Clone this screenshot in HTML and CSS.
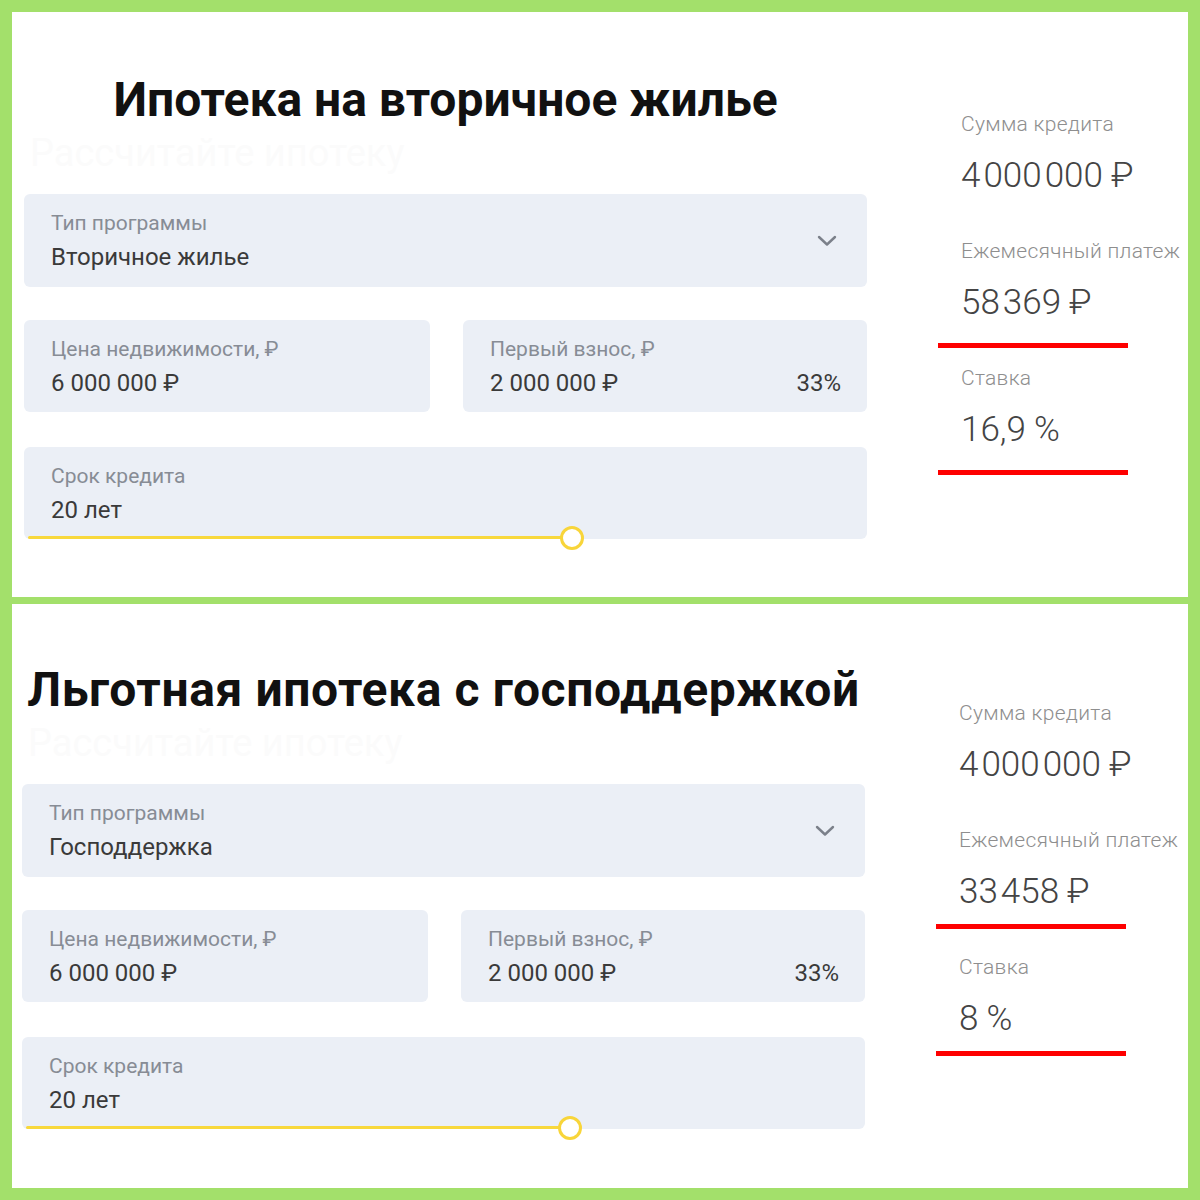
FILE: index.html
```html
<!DOCTYPE html>
<html lang="ru">
<head>
<meta charset="utf-8">
<title>Ипотечный калькулятор</title>
<link rel="stylesheet" href="styles.css">
</head>
<body>
<div class="frame">

  <section class="panel">
    <div class="calc">
      <h1 class="title">Ипотека на вторичное жилье</h1>
      <div class="ghost">Рассчитайте ипотеку</div>
      <div class="field field-select">
        <div class="field-text">
          <div class="label">Тип программы</div>
          <div class="value">Вторичное жилье</div>
        </div>
        <svg class="chevron" viewBox="0 0 20 12" width="20" height="12"><path d="M2 2 L10 9.5 L18 2" fill="none" stroke="#7b808a" stroke-width="2.4" stroke-linecap="round" stroke-linejoin="round"/></svg>
      </div>
      <div class="field-row">
        <div class="field">
          <div class="field-text">
            <div class="label">Цена недвижимости, ₽</div>
            <div class="value">6 000 000 ₽</div>
          </div>
        </div>
        <div class="field">
          <div class="field-text">
            <div class="label">Первый взнос, ₽</div>
            <div class="value value-split"><span>2 000 000 ₽</span><span>33%</span></div>
          </div>
        </div>
      </div>
      <div class="field field-slider">
        <div class="field-text">
          <div class="label">Срок кредита</div>
          <div class="value">20 лет</div>
        </div>
        <div class="track">
          <span class="track-fill" style="width: 544px"></span>
          <span class="knob"></span>
        </div>
      </div>
    </div>
    <aside class="results">
      <div class="result">
        <div class="result-label">Сумма кредита</div>
        <div class="result-value"><span>4</span><span class="grp">000</span><span class="grp">000</span><span class="cur">₽</span></div>
        <div class="rule"></div>
      </div>
      <div class="result">
        <div class="result-label">Ежемесячный платеж</div>
        <div class="result-value"><span>58</span><span class="grp">369</span><span class="cur">₽</span></div>
        <div class="rule rule-red"></div>
      </div>
      <div class="result">
        <div class="result-label">Ставка</div>
        <div class="result-value"><span>16,9</span><span class="cur">%</span></div>
        <div class="rule rule-red"></div>
      </div>
    </aside>
  </section>

  <section class="panel panel-alt">
    <div class="calc">
      <h1 class="title">Льготная ипотека с господдержкой</h1>
      <div class="ghost">Рассчитайте ипотеку</div>
      <div class="field field-select">
        <div class="field-text">
          <div class="label">Тип программы</div>
          <div class="value">Господдержка</div>
        </div>
        <svg class="chevron" viewBox="0 0 20 12" width="20" height="12"><path d="M2 2 L10 9.5 L18 2" fill="none" stroke="#7b808a" stroke-width="2.4" stroke-linecap="round" stroke-linejoin="round"/></svg>
      </div>
      <div class="field-row">
        <div class="field">
          <div class="field-text">
            <div class="label">Цена недвижимости, ₽</div>
            <div class="value">6 000 000 ₽</div>
          </div>
        </div>
        <div class="field">
          <div class="field-text">
            <div class="label">Первый взнос, ₽</div>
            <div class="value value-split"><span>2 000 000 ₽</span><span>33%</span></div>
          </div>
        </div>
      </div>
      <div class="field field-slider">
        <div class="field-text">
          <div class="label">Срок кредита</div>
          <div class="value">20 лет</div>
        </div>
        <div class="track">
          <span class="track-fill" style="width: 544px"></span>
          <span class="knob"></span>
        </div>
      </div>
    </div>
    <aside class="results">
      <div class="result">
        <div class="result-label">Сумма кредита</div>
        <div class="result-value"><span>4</span><span class="grp">000</span><span class="grp">000</span><span class="cur">₽</span></div>
        <div class="rule"></div>
      </div>
      <div class="result">
        <div class="result-label">Ежемесячный платеж</div>
        <div class="result-value"><span>33</span><span class="grp">458</span><span class="cur">₽</span></div>
        <div class="rule rule-red"></div>
      </div>
      <div class="result">
        <div class="result-label">Ставка</div>
        <div class="result-value"><span>8</span><span class="cur">%</span></div>
        <div class="rule rule-red"></div>
      </div>
    </aside>
  </section>

</div>
</body>
</html>
```
FILE: styles.css
```css
* {
  box-sizing: border-box;
}

html, body {
  margin: 0;
  padding: 0;
}

body {
  background: #a3e06b;
  font-family: Roboto, "Noto Sans", "Liberation Sans", sans-serif;
  color: #333;
}

.frame {
  width: 1200px;
  height: 1200px;
  padding: 12px;
  display: grid;
  grid-template-rows: 585px 584px;
  row-gap: 7px;
}

.panel {
  background: #fff;
  display: grid;
  grid-template-columns: 843px 1fr;
  column-gap: 71px;
  padding-left: 12px;
  overflow: hidden;
}

/* left column: heading and form fields */
.calc {
  padding-top: 60px;
  display: flex;
  flex-direction: column;
}

.title {
  margin: 0;
  font-size: 48px;
  line-height: 56px;
  font-weight: 700;
  color: #111;
  text-align: center;
  white-space: nowrap;
}

.ghost {
  height: 66px;
  padding-left: 6px;
  font-size: 38px;
  line-height: 50px;
  color: #fbfbfb;
  white-space: nowrap;
}

.field {
  background: #ebeff6;
  border-radius: 6px;
  height: 92px;
  padding: 14px 26px 0 27px;
  display: flex;
  align-items: flex-start;
}

.field-text {
  flex: 1;
}

.label {
  font-size: 21px;
  line-height: 30px;
  color: #878c95;
}

.value {
  font-size: 24px;
  line-height: 38px;
  color: #3a3a3a;
}

.value-split {
  display: flex;
  justify-content: space-between;
}

.field-select {
  height: 93px;
  align-items: center;
  padding-top: 0;
}

.chevron {
  margin-right: 4px;
}

.field-select .field-text {
  padding-top: 2px;
}

.field-row {
  margin-top: 33px;
  display: grid;
  grid-template-columns: 406px 404px;
  column-gap: 33px;
}

.field-slider {
  margin-top: 35px;
  flex-direction: column;
  align-items: stretch;
  padding-right: 0;
  padding-left: 0;
}

.field-slider .field-text {
  padding-left: 27px;
}

/* range track sits on the bottom edge of the field */
.track {
  position: relative;
  height: 3px;
  margin-top: -4px;
}

.track-fill {
  position: absolute;
  left: 4px;
  top: 0;
  height: 3px;
  background: #f8d83c;
  border-radius: 2px;
}

.knob {
  position: absolute;
  left: 536px;
  top: -10px;
  width: 24px;
  height: 24px;
  border-radius: 50%;
  background: #fff;
  border: 3px solid #f8d53a;
}

/* right column: calculated figures */
.results {
  padding-top: 100px;
  display: flex;
  flex-direction: column;
}

.result-label {
  padding-left: 23px;
  font-size: 21px;
  line-height: 24px;
  letter-spacing: 0.3px;
  color: #8e8e8e;
  white-space: nowrap;
  font-weight: 300;
}

.result-value {
  margin-top: 20px;
  padding-left: 23px;
  font-size: 35px;
  line-height: 40px;
  color: #444;
  font-weight: 300;
  white-space: nowrap;
}

.result-value .grp {
  margin-left: 3px;
}

.result-value .cur {
  margin-left: 8px;
}

.rule {
  width: 190px;
  height: 5px;
  margin-top: 20px;
  margin-bottom: 18px;
}

.rule-red {
  background: #fe0000;
}

/* second calculator sits a touch higher and further left */
.panel-alt {
  padding-left: 10px;
}

.panel-alt .calc {
  padding-top: 58px;
}

.panel-alt .title {
  letter-spacing: 0.6px;
}

.panel-alt .results {
  padding-top: 97px;
}

.panel-alt .rule {
  margin-top: 12px;
  margin-bottom: 26px;
}
```
